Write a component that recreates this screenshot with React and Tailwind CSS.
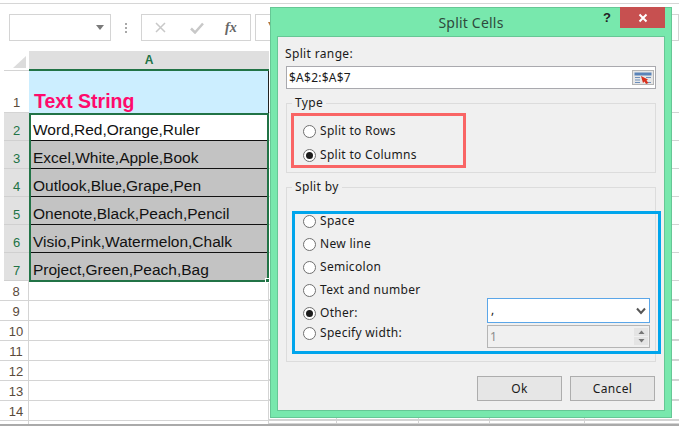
import React from 'react'

const dataRows = [
  { n: 2, text: "Word,Red,Orange,Ruler", white: true },
  { n: 3, text: "Excel,White,Apple,Book" },
  { n: 4, text: "Outlook,Blue,Grape,Pen" },
  { n: 5, text: "Onenote,Black,Peach,Pencil" },
  { n: 6, text: "Visio,Pink,Watermelon,Chalk" },
  { n: 7, text: "Project,Green,Peach,Bag" },
]

const emptyRows = [8, 9, 10, 11, 12, 13, 14]

const OtherCols = () => (
  <div className="flex flex-1 h-full border-b border-[#d4d4d4]">
    <div className="w-[68px] border-r border-[#d4d4d4]"></div>
    <div className="w-[82px] border-r border-[#d4d4d4]"></div>
    <div className="w-[71px] border-r border-[#d4d4d4]"></div>
    <div className="w-[95px] border-r border-[#d4d4d4]"></div>
  </div>
)

const Radio = ({ label, checked }) => (
  <div className="flex items-center h-[12px]">
    <div className="w-[13px] h-[13px] rounded-full border border-[#707070] bg-white flex items-center justify-center shrink-0">
      {checked && <div className="w-[7px] h-[7px] rounded-full bg-[#1c1c1c]"></div>}
    </div>
    <span className="ml-[4px] text-[12px] leading-none tracking-[0.3px] text-[#1a1a1a] whitespace-nowrap">{label}</span>
  </div>
)

const Group = ({ title, className, children }) => (
  <div className={"relative border border-[#dcdcdc] " + className}>
    <span className="absolute -top-[9px] left-[5px] px-[3px] bg-[#f0f0f0] text-[12px] leading-[16px] tracking-[0.35px] text-[#1a1a1a]">{title}</span>
    {children}
  </div>
)

const Dialog = () => (
  <div
    className="absolute left-[270px] top-[7px] w-[402px] h-[411px] bg-[#78e8ad] border border-[#66c795] flex flex-col px-[6px] pb-[6px] text-[#1a1a1a]"
    style={{ fontFamily: '"Noto Sans", sans-serif' }}
  >
    {/* Title bar */}
    <div className="relative h-[28px] shrink-0 flex justify-center items-center">
      <span className="text-[14px] tracking-[0.2px] text-[#2e4a3c]">Split Cells</span>
      <span className="absolute left-[326px] top-[0px] text-[13px] font-bold text-[#222]" style={{ fontFamily: '"Liberation Sans", sans-serif' }}>?</span>
      <div className="absolute right-[0px] -top-[1px] w-[45px] h-[21px] bg-[#c75050] flex items-center justify-center">
        <svg width="10" height="10" viewBox="0 0 10 10">
          <path d="M1.5 1.5 L8.5 8.5 M8.5 1.5 L1.5 8.5" stroke="#fff" strokeWidth="2" />
        </svg>
      </div>
    </div>

    {/* Body */}
    <div className="flex-1 bg-[#f0f0f0] border border-[#66c795] pl-[8px] pr-[8px] pt-[9px] flex flex-col">
      <span className="-ml-[1px] text-[12px] leading-[16px] tracking-[0.35px]">Split range:</span>
      <div className="mt-[4px] h-[23px] w-[370px] bg-white border border-[#a9a9ae] flex items-center justify-between pl-[2px] pr-[1px]">
        <span className="text-[12px] tracking-[0.25px]">$A$2:$A$7</span>
        <div className="w-[22px] h-[15px] bg-[#e6e6e6] border border-[#b4b4b4] flex items-center justify-center">
          <svg width="18" height="12" viewBox="0 0 18 12">
            <rect x="0.5" y="0.5" width="17" height="3" fill="#5a83b8" />
            <path d="M1 5.5h5M1 8h5M1 10.5h5M12 5.5h5M12 10.5h5" stroke="#6d8fbb" strokeWidth="1" />
            <path d="M7 4 L14 7.5 L12.5 8.5 L14.5 11 L12 12 L10.5 9.5 L9 11 Z" fill="#d9301c" />
          </svg>
        </div>
      </div>

      <Group title="Type" className="mt-[14px] h-[70px] w-[370px]">
        <div className="mt-[9px] ml-[4px] w-[175px] h-[55px] border-[3px] border-[#f96565] pl-[9px] pt-[9px] flex flex-col gap-[12px]">
          <Radio label="Split to Rows" />
          <Radio label="Split to Columns" checked />
        </div>
      </Group>

      <Group title="Split by" className="mt-[14px] h-[175px] w-[370px]">
        <div className="mt-[23px] ml-[5px] -mr-[6px] h-[143px] border-[3px] border-[#00a5ec] pl-[8px] pt-[1px] relative">
          <div className="flex flex-col gap-[11px]">
            <Radio label="Space" />
            <Radio label="New line" />
            <Radio label="Semicolon" />
            <Radio label="Text and number" />
          </div>
          <div className="mt-[11px]">
            <Radio label="Other:" checked />
          </div>
          <div className="mt-[8px]">
            <Radio label="Specify width:" />
          </div>
          {/* inputs on the right */}
          <div className="absolute left-[192px] top-[84px] w-[163px] flex flex-col gap-[2px]">
            <div className="h-[25px] bg-white border border-[#5ba6e8] flex items-center justify-between pl-[3px] pr-[3px]">
              <span className="text-[12px] leading-none -mt-[2px]">,</span>
              <svg width="10" height="8" viewBox="0 0 10 8">
                <path d="M1 1.5 L5 6 L9 1.5" fill="none" stroke="#555" strokeWidth="2" />
              </svg>
            </div>
            <div className="h-[23px] bg-[#f0f0f0] border border-[#b5b5b5] flex items-center justify-between pl-[2px] pr-[1px]">
              <span className="text-[12px] text-[#8d8d8d]">1</span>
              <div className="flex flex-col gap-[1px] w-[14px]">
                <div className="h-[8px] bg-[#e4e4e4] flex items-center justify-center">
                  <svg width="7" height="4" viewBox="0 0 7 4"><path d="M0.5 4 L3.5 0.5 L6.5 4 Z" fill="#777" /></svg>
                </div>
                <div className="h-[8px] bg-[#e4e4e4] flex items-center justify-center">
                  <svg width="7" height="4" viewBox="0 0 7 4"><path d="M0.5 0 L3.5 3.5 L6.5 0 Z" fill="#777" /></svg>
                </div>
              </div>
            </div>
          </div>
        </div>
      </Group>

      <div className="mt-[14px] w-[370px] flex justify-end gap-[8px]">
        <button className="w-[85px] h-[25px] border border-[#adadad] bg-[#e6e6e6] text-[12px] tracking-[0.35px]">Ok</button>
        <button className="w-[85px] h-[25px] border border-[#adadad] bg-[#e6e6e6] text-[12px] tracking-[0.35px] mr-[1px]">Cancel</button>
      </div>
    </div>
  </div>
)

const App = () => {
  return (
    <div className="relative w-[679px] h-[426px] bg-white overflow-hidden" style={{ fontFamily: '"Liberation Sans", sans-serif' }}>
      <div className="h-[4px] border-b border-[#d6d6d6] mb-[10px]"></div>

      {/* Formula bar */}
      <div className="h-[27px] flex items-stretch pl-[9px]">
        <div className="w-[102px] border border-[#d4d4d4] flex items-center justify-end pr-[6px]">
          <svg width="8" height="5" viewBox="0 0 8 5"><path d="M0 0 H8 L4 5 Z" fill="#7a7a7a" /></svg>
        </div>
        <div className="w-[30px] flex flex-col items-center justify-center gap-[2px]">
          <div className="w-[2px] h-[2px] bg-[#a8a8a8]"></div>
          <div className="w-[2px] h-[2px] bg-[#a8a8a8]"></div>
          <div className="w-[2px] h-[2px] bg-[#a8a8a8]"></div>
        </div>
        <div className="w-[110px] border border-[#d4d4d4] flex items-center pl-[13px]">
          <svg width="11" height="11" viewBox="0 0 11 11"><path d="M1 1 L10 10 M10 1 L1 10" stroke="#c8c8c8" strokeWidth="1.5" /></svg>
          <svg className="ml-[24px]" width="14" height="12" viewBox="0 0 14 12"><path d="M1 6.5 L5 10.5 L13 1.5" fill="none" stroke="#c8c8c8" strokeWidth="2.5" /></svg>
          <span className="ml-[21px] text-[14px] font-bold italic text-[#666]" style={{ fontFamily: '"Liberation Serif", serif' }}>fx</span>
        </div>
        <div className="ml-[4px] flex-1 border border-[#d4d4d4] pl-[12px] pt-[7px]">
          <svg width="4" height="4" viewBox="0 0 4 4"><path d="M0 0 H4 L2 4 Z" fill="#b5763a" /></svg>
        </div>
      </div>

      <div className="h-[10px]"></div>

      {/* Column header */}
      <div className="flex h-[20px] pl-[4px]">
        <div className="w-[25px] relative border-b border-[#d4d4d4]">
          <svg className="absolute right-[3px] bottom-[2px]" width="13" height="12" viewBox="0 0 13 12"><path d="M0 12 L13 0 V12 Z" fill="#dcdcdc" /></svg>
        </div>
        <div className="w-[240px] bg-[#dfdfdf] border-b-2 border-[#217346] flex items-center justify-center text-[12px] font-bold text-[#217346]">A</div>
      </div>

      {/* Row 1 */}
      <div className="flex h-[42px] pl-[4px]">
        <div className="w-[25px] flex items-end justify-center pb-[3px] text-[13px] leading-none text-[#5a4a3a] border-b border-[#d4d4d4]">1</div>
        <div className="w-[240px] bg-[#cceeff] border-r border-[#222] flex items-end pl-[5px] pb-[1px]">
          <span className="text-[19.5px] leading-[22px] font-bold text-[#ff0a6c]">Text String</span>
        </div>
        <OtherCols />
      </div>

      {/* Rows 2-7 */}
      <div className="relative">
        {dataRows.map((row) => (
          <div key={row.n} className="flex h-[28px] pl-[4px]">
            <div className="w-[25px] bg-[#e1e1e1] flex items-center justify-center pt-[7px] text-[13px] leading-none text-[#217346] border-b border-[#d0d0d0]">{row.n}</div>
            <div className={"w-[240px] flex items-center pl-[4px] pt-[6px] border-b border-[#111] text-[15.5px] leading-[20px] text-[#111] whitespace-nowrap " + (row.white ? "bg-white" : "bg-[#c3c3c3]")}>
              {row.text}
            </div>
            <OtherCols />
          </div>
        ))}
        {/* selection outline */}
        <div className="absolute left-[29px] top-0 w-[240px] h-[169px] border-2 border-[#217346] pointer-events-none"></div>
        <div className="absolute left-[265px] top-[165px] w-[5px] h-[5px] bg-[#217346] border border-white"></div>
      </div>

      {/* Rows 8-14 */}
      {emptyRows.map((n) => (
        <div key={n} className="flex h-[20px] pl-[4px] border-b border-[#d4d4d4]">
          <div className="w-[25px] flex items-center justify-center pt-[2px] text-[13px] leading-none text-[#5a4a3a] border-r border-[#d4d4d4]">{n}</div>
          <div className="w-[240px] border-r border-[#d4d4d4]"></div>
          <OtherCols />
        </div>
      ))}

      {/* cut off row 15 */}
      <div className="flex h-[3px] pl-[4px]">
        <div className="w-[25px] border-r border-[#d4d4d4]"></div>
        <div className="w-[240px] border-r border-[#d4d4d4]"></div>
        <OtherCols />
      </div>
      <div className="h-[2px] bg-[#aaaaaa]"></div>

      <Dialog />
    </div>
  )
}

export default App
